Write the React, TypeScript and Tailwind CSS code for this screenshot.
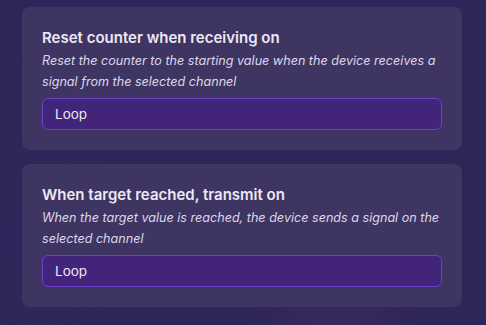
const SECTIONS = [
  {
    title: 'Reset counter when receiving on',
    description:
      'Reset the counter to the starting value when the device receives a signal from the selected channel',
    value: 'Loop',
  },
  {
    title: 'When target reached, transmit on',
    description:
      'When the target value is reached, the device sends a signal on the selected channel',
    value: 'Loop',
  },
]

function ChannelCard({ title, description, value }: { title: string; description: string; value: string }) {
  return (
    <div className="rounded-lg bg-[#3f3563] px-5 pb-5 pt-[19px]">
      <h3 className="text-[15px] font-semibold leading-6 text-[#ece8f3]">{title}</h3>
      <p className="text-[12.6px] italic leading-[21px] text-[#ddd7ea]">{description}</p>
      <div className="mt-[6px] flex h-8 items-center rounded-md border border-[#6b41cc] bg-[#42257a] px-3">
        <span className="text-[13.5px] text-[#ece8f3]">{value}</span>
      </div>
    </div>
  )
}

export default function App() {
  return (
    <div
      className="relative h-[325px] w-full overflow-hidden bg-[#2f2558]"
      style={{ fontFamily: 'Inter, "Noto Sans", sans-serif' }}
    >
      <div className="pointer-events-none absolute -left-10 top-40 h-40 w-40 rounded-full bg-[#3a2d66] opacity-40 blur-3xl" />
      <div className="pointer-events-none absolute left-72 top-72 h-24 w-24 rounded-full bg-[#5a3a6a] opacity-40 blur-2xl" />
      <div className="relative flex flex-col gap-[14px] px-[22px] pr-6 pt-[7px]">
        {SECTIONS.map((s) => (
          <ChannelCard key={s.title} {...s} />
        ))}
      </div>
    </div>
  )
}
